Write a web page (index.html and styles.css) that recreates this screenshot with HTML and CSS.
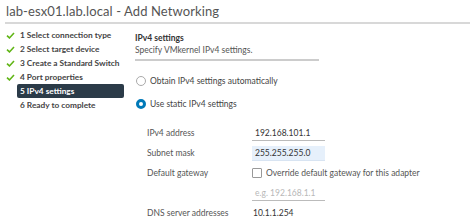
FILE: index.html
```html
<!DOCTYPE html>
<html>
<head>
  <link rel="stylesheet" href="styles.css">
</head>
<body>
  <div class="header">
    <h1 class="title">lab-esx01.lab.local - Add Networking</h1>
  </div>

  <div class="wizard">
    <ul class="steps">
      <li class="step done">
        <span class="step-icon"><svg viewBox="0 0 10 8" width="9" height="7"><path d="M1 4.2 L3.8 6.8 L9 1.2" fill="none" stroke="#60b515" stroke-width="1.8"/></svg></span>
        <span class="step-label">1 Select connection type</span>
      </li>
      <li class="step done">
        <span class="step-icon"><svg viewBox="0 0 10 8" width="9" height="7"><path d="M1 4.2 L3.8 6.8 L9 1.2" fill="none" stroke="#60b515" stroke-width="1.8"/></svg></span>
        <span class="step-label">2 Select target device</span>
      </li>
      <li class="step done">
        <span class="step-icon"><svg viewBox="0 0 10 8" width="9" height="7"><path d="M1 4.2 L3.8 6.8 L9 1.2" fill="none" stroke="#60b515" stroke-width="1.8"/></svg></span>
        <span class="step-label">3 Create a Standard Switch</span>
      </li>
      <li class="step done">
        <span class="step-icon"><svg viewBox="0 0 10 8" width="9" height="7"><path d="M1 4.2 L3.8 6.8 L9 1.2" fill="none" stroke="#60b515" stroke-width="1.8"/></svg></span>
        <span class="step-label">4 Port properties</span>
      </li>
      <li class="step active">
        <span class="step-icon"></span>
        <span class="step-label">5 IPv4 settings</span>
      </li>
      <li class="step">
        <span class="step-icon"></span>
        <span class="step-label">6 Ready to complete</span>
      </li>
    </ul>

    <div class="content">
      <div class="section-head">
        <div class="section-title">IPv4 settings</div>
        <div class="section-desc">Specify VMkernel IPv4 settings.</div>
      </div>

      <label class="radio-row">
        <span class="radio"></span>
        <span>Obtain IPv4 settings automatically</span>
      </label>
      <label class="radio-row">
        <span class="radio checked"></span>
        <span>Use static IPv4 settings</span>
      </label>

      <div class="form">
        <div class="form-row">
          <div class="form-label">IPv4 address</div>
          <div class="input">192.168.101.1</div>
        </div>
        <div class="form-row">
          <div class="form-label">Subnet mask</div>
          <div class="input focused">255.255.255.0</div>
        </div>
        <div class="form-row">
          <div class="form-label">Default gateway</div>
          <label class="check-row">
            <span class="checkbox"></span>
            <span>Override default gateway for this adapter</span>
          </label>
        </div>
        <div class="form-row">
          <div class="form-label"></div>
          <div class="input placeholder">e.g. 192.168.1.1</div>
        </div>
        <div class="form-row">
          <div class="form-label">DNS server addresses</div>
          <div class="value">10.1.1.254</div>
        </div>
      </div>
    </div>
  </div>
</body>
</html>
```

FILE: styles.css
```css
body {
  margin: 0;
  background: #fff;
  font-family: Lato, "Open Sans", sans-serif;
  color: #333;
}

.header {
  margin: 0 4px 0 5px;
  height: 22px;
  border-bottom: 2px solid #d8d8d8;
}

.title {
  margin: 0;
  padding: 3px 0 0 1px;
  font-size: 13px;
  font-weight: 400;
  line-height: 17px;
  letter-spacing: 0.1px;
  color: #555;
}

.wizard {
  display: flex;
}

.steps {
  list-style: none;
  margin: 4px 0 0 0;
  padding: 0;
  width: 135px;
  flex-shrink: 0;
}

.step {
  display: flex;
  align-items: center;
  height: 14px;
  font-size: 8.3px;
  font-weight: 700;
  color: #444;
}

.step-icon {
  width: 17px;
  display: flex;
  justify-content: center;
  padding-left: 3px;
  box-sizing: border-box;
}

.step-label {
  width: 107px;
  height: 14px;
  line-height: 14px;
  padding-left: 3px;
  box-sizing: border-box;
  border-radius: 2px;
}

.step.active .step-label {
  background: #2b3b48;
  color: #fff;
}

.content {
  padding-top: 8px;
  width: 190px;
  font-size: 8.5px;
}

.section-head {
  width: 184px;
  padding-bottom: 2px;
  border-bottom: 2px solid #ccc;
}

.section-title {
  font-weight: 700;
  line-height: 12px;
  color: #333;
}

.section-desc {
  line-height: 13px;
  color: #555;
}

.radio-row {
  display: flex;
  align-items: center;
  gap: 4px;
  height: 23px;
  color: #444;
  white-space: nowrap;
}

.radio-row:first-of-type {
  margin-top: 8px;
}

.radio {
  width: 8px;
  height: 8px;
  border: 1px solid #aaa;
  border-radius: 50%;
  margin-left: 1px;
  box-sizing: content-box;
}

.radio.checked {
  border: 3px solid #0079b8;
  width: 4px;
  height: 4px;
  background: #fff;
}

.form {
  margin-top: 8px;
  padding-left: 12px;
}

.form-row {
  display: flex;
  align-items: center;
  height: 20px;
  white-space: nowrap;
}

.form-label {
  width: 105px;
  flex-shrink: 0;
  color: #555;
}

.input {
  width: 80px;
  height: 15px;
  line-height: 15px;
  padding-left: 3px;
  box-sizing: border-box;
  border-bottom: 1px solid #bbb;
  color: #333;
}

.input.focused {
  background: #e6f0fb;
  border-bottom-color: #d8e4f2;
}

.input.placeholder {
  color: #b8b8b8;
}

.check-row {
  display: flex;
  align-items: center;
  gap: 4px;
  color: #555;
}

.checkbox {
  width: 8px;
  height: 8px;
  border: 1px solid #999;
  border-radius: 1px;
}

.value {
  padding-left: 1px;
  color: #333;
}
```
